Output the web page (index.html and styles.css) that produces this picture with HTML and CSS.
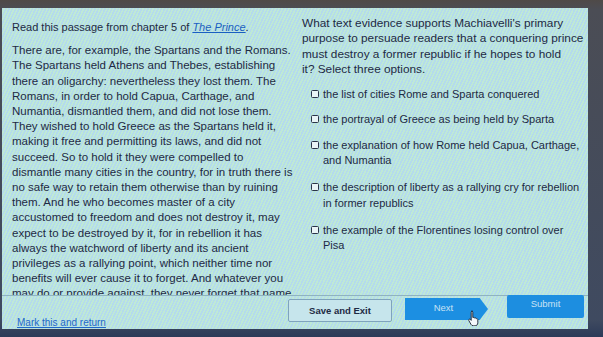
FILE: index.html
```
<!DOCTYPE html>
<html>
<head>
<meta charset="utf-8">
<link rel="stylesheet" href="styles.css">
</head>
<body>
<div class="screen">
  <div class="main">
    <div class="passage">
      <p class="intro">Read this passage from chapter 5 of <a class="title-link">The Prince</a>.</p>
      <p class="text">There are, for example, the Spartans and the Romans.<br>
The Spartans held Athens and Thebes, establishing<br>
there an oligarchy: nevertheless they lost them. The<br>
Romans, in order to hold Capua, Carthage, and<br>
Numantia, dismantled them, and did not lose them.<br>
They wished to hold Greece as the Spartans held it,<br>
making it free and permitting its laws, and did not<br>
succeed. So to hold it they were compelled to<br>
dismantle many cities in the country, for in truth there is<br>
no safe way to retain them otherwise than by ruining<br>
them. And he who becomes master of a city<br>
accustomed to freedom and does not destroy it, may<br>
expect to be destroyed by it, for in rebellion it has<br>
always the watchword of liberty and its ancient<br>
privileges as a rallying point, which neither time nor<br>
benefits will ever cause it to forget. And whatever you<br>
may do or provide against, they never forget that name<br>
or their privileges unless they are disunited or dispersed.</p>
    </div>
    <div class="question">
      <p class="prompt">What text evidence supports Machiavelli's primary<br>
purpose to persuade readers that a conquering prince<br>
must destroy a former republic if he hopes to hold<br>
it? Select three options.</p>
      <ul class="options">
        <li><span class="box"></span><span>the list of cities Rome and Sparta conquered</span></li>
        <li><span class="box"></span><span>the portrayal of Greece as being held by Sparta</span></li>
        <li><span class="box"></span><span>the explanation of how Rome held Capua, Carthage, and Numantia</span></li>
        <li><span class="box"></span><span>the description of liberty as a rallying cry for rebellion in former republics</span></li>
        <li><span class="box"></span><span>the example of the Florentines losing control over Pisa</span></li>
      </ul>
    </div>
  </div>
  <div class="footer">
    <a class="mark">Mark this and return</a>
    <div class="buttons">
      <button class="btn save">Save and Exit</button>
      <button class="btn next">Next</button>
      <button class="btn submit">Submit</button>
    </div>
    <svg class="cursor" width="12" height="16" viewBox="0 0 12 16">
      <path d="M3.5 1.2c.8 0 1.3.5 1.3 1.3v5l.3-.1c.7-.2 1.4.1 1.6.6.6-.3 1.4 0 1.6.6.7-.2 1.5.2 1.5 1v3.2c0 1.6-1 3-2.7 3H5.2c-1 0-1.6-.6-2.2-1.4L.9 10.7c-.4-.6-.2-1.3.4-1.5.5-.2 1 0 1.3.4l.6.8V2.5c0-.8.5-1.3 1.3-1.3z" fill="#f4f8fb" stroke="#1a2030" stroke-width="0.9"/>
    </svg>
  </div>
</div>
</body>
</html>
```
FILE: styles.css
```
* { box-sizing: border-box; }
html, body { margin: 0; padding: 0; }
body {
  width: 603px;
  height: 337px;
  overflow: hidden;
  background: linear-gradient(180deg, #4f4a48 0, #4b4d55 10px, #3f4a60 320px, #2c3a58 337px);
  font-family: "Liberation Sans", Arial, sans-serif;
  color: #1d2a44;
  padding: 8px 15px 8px 2px;
}
.screen {
  position: relative;
  height: 321px;
  background-color: #b9e2e2;
  background-image: repeating-linear-gradient(115deg, #b4dbec 0, #b4dbec 1.5px, #bfe9d6 1.5px, #bfe9d6 3px);
  display: flex;
  flex-direction: column;
}
.main {
  height: 288px;
  display: flex;
  overflow: hidden;
  border-bottom: 1px solid #8fb3c0;
}
.passage {
  flex: none;
  width: 296px;
  padding: 12px 0 0 10px;
  font-size: 11.5px;
  line-height: 15.2px;
  white-space: nowrap;
}
.passage p { margin: 0; }
.intro { margin-bottom: 8px !important; font-size: 11px; }
.title-link {
  color: #1a5fc0;
  font-style: italic;
  text-decoration: underline;
}
.question {
  flex: 1;
  min-width: 0;
  padding: 8px 0 0 4px;
  font-size: 11px;
  line-height: 15.3px;
}
.prompt {
  margin: 0 0 10px;
  font-size: 11.8px;
  white-space: nowrap;
}
.options {
  list-style: none;
  margin: 0;
  padding: 0 0 0 9px;
}
.options li {
  display: flex;
  gap: 4px;
  margin-bottom: 10px;
  width: 274px;
}
.options li:nth-child(3), .options li:nth-child(4) { margin-bottom: 12px; }
.box {
  flex: none;
  width: 8px;
  height: 8px;
  margin-top: 3px;
  border: 1px solid #2a3548;
  border-radius: 1.5px;
  background: #e8f4f6;
}
.footer {
  position: relative;
  flex: 1;
  display: flex;
  align-items: flex-start;
  justify-content: space-between;
  padding: 2px 4px 0 15px;
}
.mark {
  margin-top: 19px;
  font-size: 10px;
  color: #1f68c8;
  text-decoration: underline;
}
.buttons {
  display: flex;
  align-items: flex-start;
}
.btn {
  font-family: "Liberation Sans", Arial, sans-serif;
  font-size: 9.5px;
  border: none;
  padding: 0;
  height: 23px;
}
.save {
  width: 104px;
  margin-top: 1px;
  margin-right: 13px;
  background: #c6e5ec;
  border: 1px solid #7fa4bc;
  border-radius: 2px;
  color: #1d2a44;
  font-weight: bold;
}
.next {
  width: 83px;
  height: 22px;
  margin-right: 19px;
  background: #1c8fe2;
  color: #c9e2f4;
  clip-path: polygon(0 0, 90% 0, 100% 50%, 90% 100%, 0 100%);
  padding-right: 6px;
  padding-bottom: 4px;
}
.submit {
  width: 77px;
  margin-top: -3px;
  background: #1d8ee0;
  color: #c9e2f4;
  border-radius: 2px;
  padding-bottom: 6px;
}
.cursor {
  position: absolute;
  left: 466px;
  top: 14px;
}
```
